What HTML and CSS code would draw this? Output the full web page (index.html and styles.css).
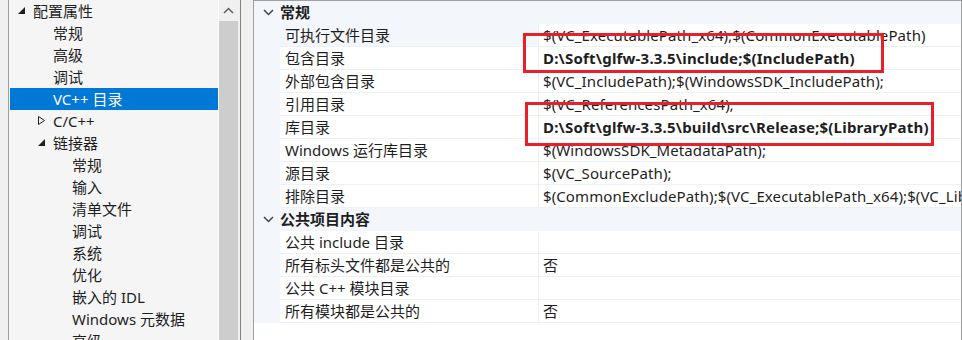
FILE: index.html
```html
<!DOCTYPE html>
<html lang="zh-CN">
<head>
  <meta charset="utf-8" />
  <title>VC++ 目录</title>
  <link rel="stylesheet" href="styles.css">
</head>
<body>
<div class="pp-edge"></div>

<div class="pp-tree">
  <div class="pp-node pp-node--l0"><span class="pp-tw"><svg width="8" height="8" viewBox="0 0 8 8"><polygon points="7,0 7,7 0,7" fill="#1e1e1e"/></svg></span>配置属性</div>
  <div class="pp-node pp-node--l1"><span class="pp-tw"></span>常规</div>
  <div class="pp-node pp-node--l1"><span class="pp-tw"></span>高级</div>
  <div class="pp-node pp-node--l1"><span class="pp-tw"></span>调试</div>
  <div class="pp-node pp-node--l1 pp-node--sel"><span class="pp-tw"></span>VC++ 目录</div>
  <div class="pp-node pp-node--l1"><span class="pp-tw"><svg width="8" height="10" viewBox="0 0 8 10"><polygon points="0.5,0.5 6.5,4.5 0.5,8.5" fill="none" stroke="#1e1e1e"/></svg></span>C/C++</div>
  <div class="pp-node pp-node--l1"><span class="pp-tw"><svg width="8" height="8" viewBox="0 0 8 8"><polygon points="7,0 7,7 0,7" fill="#1e1e1e"/></svg></span>链接器</div>
  <div class="pp-node pp-node--l2"><span class="pp-tw"></span>常规</div>
  <div class="pp-node pp-node--l2"><span class="pp-tw"></span>输入</div>
  <div class="pp-node pp-node--l2"><span class="pp-tw"></span>清单文件</div>
  <div class="pp-node pp-node--l2"><span class="pp-tw"></span>调试</div>
  <div class="pp-node pp-node--l2"><span class="pp-tw"></span>系统</div>
  <div class="pp-node pp-node--l2"><span class="pp-tw"></span>优化</div>
  <div class="pp-node pp-node--l2"><span class="pp-tw"></span>嵌入的 IDL</div>
  <div class="pp-node pp-node--l2"><span class="pp-tw"></span>Windows 元数据</div>
  <div class="pp-node pp-node--l2"><span class="pp-tw"></span>高级</div>
</div>

<div class="pp-scroll">
  <div class="pp-scroll--btn"><svg width="11" height="7" viewBox="0 0 11 7"><polyline points="1,6 5.5,1.5 10,6" fill="none" stroke="#606060" stroke-width="1.5"/></svg></div>
  <div class="pp-scroll--thumb"></div>
</div>

<div class="pp-split"></div>

<div class="pp-grid">
  <div class="pp-cat"><span class="pp-gut"><svg width="11" height="7" viewBox="0 0 11 7"><polyline points="1,1 5.5,5.5 10,1" fill="none" stroke="#444" stroke-width="1.5"/></svg></span>常规</div>
  <div class="pp-row pp-row--focus"><span class="pp-gut"></span><span class="pp-name">可执行文件目录</span><span class="pp-val">$(VC_ExecutablePath_x64);$(CommonExecutablePath)</span></div>
  <div class="pp-row"><span class="pp-gut"></span><span class="pp-name">包含目录</span><span class="pp-val pp-val--set">D:\Soft\glfw-3.3.5\include;$(IncludePath)</span></div>
  <div class="pp-row"><span class="pp-gut"></span><span class="pp-name">外部包含目录</span><span class="pp-val">$(VC_IncludePath);$(WindowsSDK_IncludePath);</span></div>
  <div class="pp-row"><span class="pp-gut"></span><span class="pp-name">引用目录</span><span class="pp-val">$(VC_ReferencesPath_x64);</span></div>
  <div class="pp-row"><span class="pp-gut"></span><span class="pp-name">库目录</span><span class="pp-val pp-val--set">D:\Soft\glfw-3.3.5\build\src\Release;$(LibraryPath)</span></div>
  <div class="pp-row"><span class="pp-gut"></span><span class="pp-name">Windows 运行库目录</span><span class="pp-val">$(WindowsSDK_MetadataPath);</span></div>
  <div class="pp-row"><span class="pp-gut"></span><span class="pp-name">源目录</span><span class="pp-val">$(VC_SourcePath);</span></div>
  <div class="pp-row"><span class="pp-gut"></span><span class="pp-name">排除目录</span><span class="pp-val">$(CommonExcludePath);$(VC_ExecutablePath_x64);$(VC_LibraryPath_x64)</span></div>
  <div class="pp-cat"><span class="pp-gut"><svg width="11" height="7" viewBox="0 0 11 7"><polyline points="1,1 5.5,5.5 10,1" fill="none" stroke="#444" stroke-width="1.5"/></svg></span>公共项目内容</div>
  <div class="pp-row"><span class="pp-gut"></span><span class="pp-name">公共 include 目录</span><span class="pp-val"></span></div>
  <div class="pp-row"><span class="pp-gut"></span><span class="pp-name">所有标头文件都是公共的</span><span class="pp-val">否</span></div>
  <div class="pp-row"><span class="pp-gut"></span><span class="pp-name">公共 C++ 模块目录</span><span class="pp-val"></span></div>
  <div class="pp-row"><span class="pp-gut"></span><span class="pp-name">所有模块都是公共的</span><span class="pp-val">否</span></div>

  <!-- annotation boxes over the grid -->
  <div class="pp-mark pp-mark--inc"></div>
  <div class="pp-mark pp-mark--lib"></div>
</div>
</body>
</html>
```

FILE: styles.css
```css
:root {
  --rahmen: #a0a0a0;
  --grau: #f0f0f0;
  --baum: #f5f5f5;
  --hellblau: #f3f6fb;
  --linie: #edf0f5;
  --text: #1e1e1e;
  --auswahl: #0078d7;
  --rot: #e8202a;
}
html, body {
  height: 100%;
}
body {
  margin: 0;
  display: flex;
  height: 340px;
  overflow: hidden;
  background-color: var(--grau);
  font-family: "Noto Sans", "Noto Sans CJK SC", sans-serif;
  font-size: 15px;
  color: var(--text);
}
.pp-edge {
  flex: none;
  width: 8px;
  border-right: 1px solid var(--rahmen);
}
.pp-tree {
  flex: none;
  width: 208px;
  padding-left: 1px;
  background-color: var(--baum);
  border-right: 1px solid #fff;
  overflow: hidden;
}
.pp-node {
  display: flex;
  align-items: center;
  height: 22px;
  line-height: 22px;
  white-space: nowrap;
}
.pp-node--l0 {
  padding-left: 8px;
}
.pp-node--l1 {
  padding-left: 28px;
}
.pp-node--l2 {
  padding-left: 47px;
}
.pp-node--sel {
  background-color: var(--auswahl);
  color: #fff;
}
.pp-tw {
  flex: none;
  width: 15px;
  display: flex;
  align-items: center;
}
.pp-scroll {
  flex: none;
  width: 19px;
  display: flex;
  flex-direction: column;
}
.pp-scroll--btn {
  height: 21px;
  display: flex;
  align-items: center;
  justify-content: center;
}
.pp-scroll--thumb {
  flex: 1;
  background-color: #cdcdcd;
}
.pp-split {
  flex: none;
  width: 1px;
  margin: 0 12px 0 2px;
  background-color: #828282;
}
.pp-grid {
  position: relative;
  flex: 1;
  background-color: #fff;
  border-left: 1px solid var(--rahmen);
  border-top: 1px solid var(--rahmen);
  border-right: 1px solid var(--rahmen);
  overflow: hidden;
}
.pp-cat,
.pp-row {
  display: flex;
  height: 23px;
  line-height: 22px;
  white-space: nowrap;
}
.pp-cat {
  background-color: var(--hellblau);
  font-weight: bold;
}
.pp-gut {
  flex: none;
  width: 26px;
  display: flex;
  align-items: center;
  justify-content: center;
  padding-right: 5px;
  box-sizing: border-box;
  background-color: var(--hellblau);
}
.pp-cat .pp-gut {
  padding-left: 6px;
  padding-right: 0;
}
.pp-cat .pp-gut svg {
  margin-right: 3px;
}
.pp-name {
  flex: none;
  width: 258px;
  padding-left: 5px;
  box-sizing: border-box;
  border-bottom: 1px solid var(--linie);
}
.pp-row--focus .pp-name {
  background-color: var(--hellblau);
}
.pp-val {
  flex: 1;
  min-width: 0;
  overflow: hidden;
  padding-left: 4px;
  letter-spacing: 0.1px;
  border-left: 1px solid var(--linie);
  border-bottom: 1px solid var(--linie);
}
.pp-val--set {
  font-weight: bold;
  letter-spacing: 0.2px;
}
.pp-mark {
  position: absolute;
  border: 3px solid var(--rot);
  box-sizing: border-box;
}
.pp-mark--inc {
  left: 269px;
  top: 32px;
  width: 361px;
  height: 40px;
}
.pp-mark--lib {
  left: 271px;
  top: 101px;
  width: 409px;
  height: 44px;
}
```
